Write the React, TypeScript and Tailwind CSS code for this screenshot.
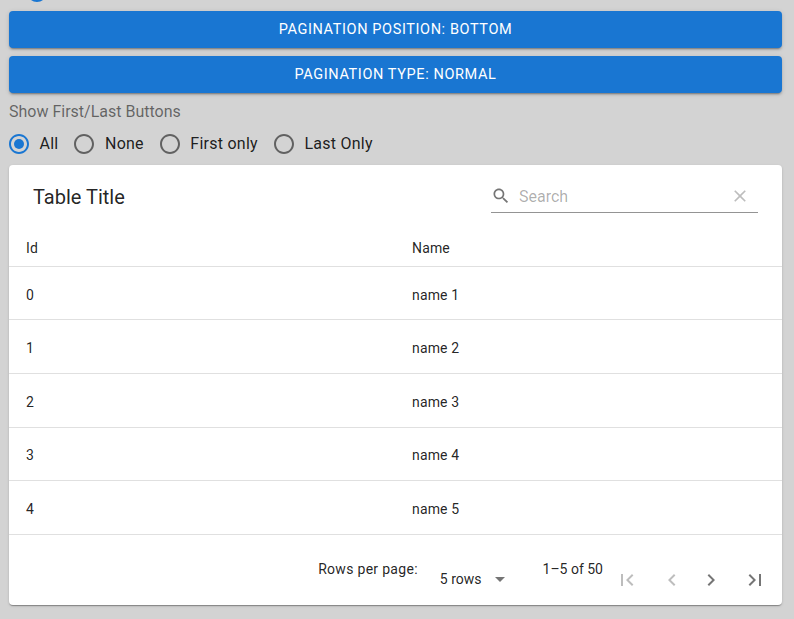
import React from 'react'

const rows = [
  { id: 0, name: 'name 1' },
  { id: 1, name: 'name 2' },
  { id: 2, name: 'name 3' },
  { id: 3, name: 'name 4' },
  { id: 4, name: 'name 5' },
]

const radios = [
  { label: 'All', checked: true },
  { label: 'None', checked: false },
  { label: 'First only', checked: false },
  { label: 'Last Only', checked: false },
]

const radioRing =
  'M12 2C6.48 2 2 6.48 2 12s4.48 10 10 10 10-4.48 10-10S17.52 2 12 2zm0 18c-4.42 0-8-3.58-8-8s3.58-8 8-8 8 3.58 8 8-3.58 8-8 8z'

function Radio({ label, checked }: { label: string; checked: boolean }) {
  return (
    <label className="flex items-center gap-[8.5px]">
      <svg width="24" height="24" viewBox="0 0 24 24" className={checked ? 'fill-[#1976d2]' : 'fill-[#0000008a]'}>
        <path d={radioRing} />
        {checked && <circle cx="12" cy="12" r="5" />}
      </svg>
      <span className="text-base leading-6 tracking-[0.25px] text-[#000000de]">{label}</span>
    </label>
  )
}

function PagerIcon({ d, className }: { d: string; className: string }) {
  return (
    <svg width="24" height="24" viewBox="0 0 24 24" className={className}>
      <path d={d} />
    </svg>
  )
}

export default function App() {
  return (
    <div className="h-[619px] overflow-hidden bg-[#d3d3d3] pl-[9px] pr-[12px] font-['Roboto',sans-serif]">
      <div className="h-[11px] overflow-hidden pl-[16px]">
        <svg width="24" height="24" viewBox="0 0 24 24" className="-mt-[20px] fill-[#1976d2]">
          <path d={radioRing} />
        </svg>
      </div>
      <div className="flex flex-col gap-[8.5px]">
        <button className="h-[36.5px] rounded-[4px] bg-[#1976d2] pt-px text-[14.5px] tracking-[0.61px] text-white shadow-[0_3px_1px_-2px_#0003,0_2px_2px_0_#00000024,0_1px_5px_0_#0000001f]">
          PAGINATION POSITION: BOTTOM
        </button>
        <button className="h-[36.5px] rounded-[4px] bg-[#1976d2] pt-px text-[14.5px] tracking-[0.61px] text-white shadow-[0_3px_1px_-2px_#0003,0_2px_2px_0_#00000024,0_1px_5px_0_#0000001f]">
          PAGINATION TYPE: NORMAL
        </button>
      </div>
      <div className="mt-[8px] text-base leading-[22px] text-[#0000008a]">Show First/Last Buttons</div>
      <div className="-ml-[2px] mt-[9px] flex gap-[14px]">
        {radios.map((r) => (
          <Radio key={r.label} label={r.label} checked={r.checked} />
        ))}
      </div>
      <div className="mt-[9px] rounded-[4px] bg-white shadow-[0_2px_1px_-1px_#0003,0_1px_1px_0_#00000024,0_1px_3px_0_#0000001f]">
        <div className="flex h-[64px] items-center justify-between px-[24px]">
          <h2 className="text-[20px] leading-8 text-[#000000de]">Table Title</h2>
          <div className="flex h-[32px] w-[267px] items-center border-b border-[#949494]">
            <svg width="20" height="20" viewBox="0 0 24 24" className="fill-[#0000008a]">
              <path d="M15.5 14h-.79l-.28-.27C15.41 12.59 16 11.11 16 9.5 16 5.91 13.09 3 9.5 3S3 5.91 3 9.5 5.91 16 9.5 16c1.61 0 3.09-.59 4.23-1.57l.27.28v.79l5 4.99L20.49 19l-4.99-5zm-6 0C7.01 14 5 11.99 5 9.5S7.01 5 9.5 5 14 7.01 14 9.5 11.99 14 9.5 14z" />
            </svg>
            <span className="ml-[8px] flex-1 pt-px text-base text-[#00000052]">Search</span>
            <svg width="20" height="20" viewBox="0 0 24 24" className="mr-[8px] fill-[#00000042]">
              <path d="M19 6.41 17.59 5 12 10.59 6.41 5 5 6.41 10.59 12 5 17.59 6.41 19 12 13.41 17.59 19 19 17.59 13.41 12z" />
            </svg>
          </div>
        </div>
        <table className="w-full table-fixed border-collapse text-sm tracking-[0.15px] text-[#000000de]">
          <thead>
            <tr className="h-[37.9px] border-b border-[#e0e0e0]">
              <th className="w-[386px] pl-[17px] pt-px text-left font-normal">Id</th>
              <th className="pl-[17px] pt-px text-left font-normal">Name</th>
            </tr>
          </thead>
          <tbody>
            {rows.map((row) => (
              <tr key={row.id} className="h-[53.6px] border-b border-[#e0e0e0]">
                <td className="pl-[17px] pt-[3px]">{row.id}</td>
                <td className="pl-[17px] pt-[3px]">{row.name}</td>
              </tr>
            ))}
          </tbody>
        </table>
        <div className="flex h-[70px] justify-end pr-[15px] text-sm text-[#000000de]">
          <span className="mt-[26px] leading-[16px] tracking-[0.3px]">Rows per page:</span>
          <div className="ml-[22px] mt-[32px] flex h-[24px] items-center">
            <span className="leading-[24px]">5 rows</span>
            <svg width="24" height="24" viewBox="0 0 24 24" className="ml-[6px] fill-[#0000008a]">
              <path d="M7 10l5 5 5-5z" />
            </svg>
          </div>
          <span className="ml-[31px] mt-[26px] leading-[16px]">1–5 of 50</span>
          <div className="ml-[12px] mt-[33px] flex">
            <PagerIcon className="fill-[#00000042]" d="M18.41 16.59 13.82 12l4.59-4.59L17 6l-6 6 6 6zM6 6h2v12H6z" />
            <span className="ml-[21px]">
              <PagerIcon className="fill-[#00000042]" d="M15.41 7.41 14 6l-6 6 6 6 1.41-1.41L10.83 12z" />
            </span>
            <span className="ml-[15px]">
              <PagerIcon className="fill-[#0000008a]" d="M10 6 8.59 7.41 13.17 12l-4.58 4.59L10 18l6-6z" />
            </span>
            <span className="ml-[20px]">
              <PagerIcon className="fill-[#0000008a]" d="M5.59 7.41 10.18 12l-4.59 4.59L7 18l6-6-6-6zM16 6h2v12h-2z" />
            </span>
          </div>
        </div>
      </div>
    </div>
  )
}
